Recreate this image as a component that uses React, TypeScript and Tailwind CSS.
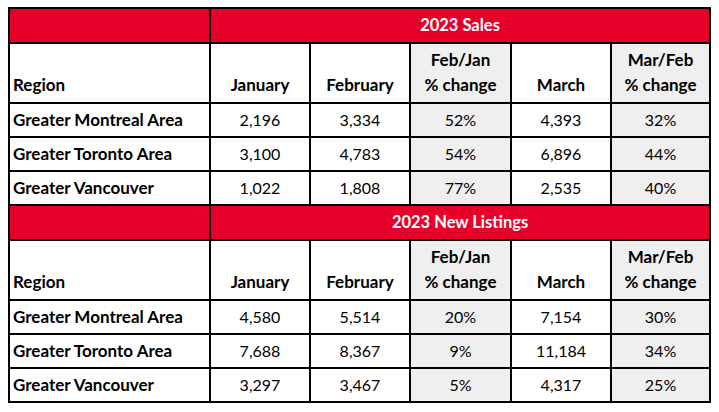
import React from "react"

type Row = {
  region: string
  jan: string
  feb: string
  febJan: string
  mar: string
  marFeb: string
}

const sales: Row[] = [
  { region: "Greater Montreal Area", jan: "2,196", feb: "3,334", febJan: "52%", mar: "4,393", marFeb: "32%" },
  { region: "Greater Toronto Area", jan: "3,100", feb: "4,783", febJan: "54%", mar: "6,896", marFeb: "44%" },
  { region: "Greater Vancouver", jan: "1,022", feb: "1,808", febJan: "77%", mar: "2,535", marFeb: "40%" },
]

const listings: Row[] = [
  { region: "Greater Montreal Area", jan: "4,580", feb: "5,514", febJan: "20%", mar: "7,154", marFeb: "30%" },
  { region: "Greater Toronto Area", jan: "7,688", feb: "8,367", febJan: "9%", mar: "11,184", marFeb: "34%" },
  { region: "Greater Vancouver", jan: "3,297", feb: "3,467", febJan: "5%", mar: "4,317", marFeb: "25%" },
]

const cell = "border-2 border-black"
const gray = "bg-[#efefef]"

function Section({ title, rows }: { title: string; rows: Row[] }) {
  return (
    <>
      {/* red title band */}
      <tr className="h-[35px] bg-[#e8002b]">
        <td className={cell}></td>
        <td colSpan={5} className={`${cell} text-center font-bold text-white text-[16.5px]`}>
          {title}
        </td>
      </tr>

      {/* column headings */}
      <tr className="h-[60px] font-bold align-bottom text-[17px]">
        <td className={`${cell} pl-[3px] pb-[5px] text-left`}>Region</td>
        <td className={`${cell} pb-[5px] text-center`}>January</td>
        <td className={`${cell} pb-[5px] text-center`}>February</td>
        <td className={`${cell} ${gray} pb-[5px] text-center leading-[25px]`}>
          Feb/Jan
          <br />% change
        </td>
        <td className={`${cell} pb-[5px] text-center`}>March</td>
        <td className={`${cell} ${gray} pb-[5px] text-center leading-[25px]`}>
          Mar/Feb
          <br />% change
        </td>
      </tr>

      {rows.map((r) => (
        <tr key={r.region} className="h-[34px]">
          <td className={`${cell} pl-[3px] font-bold text-[17px]`}>{r.region}</td>
          <td className={`${cell} text-center`}>{r.jan}</td>
          <td className={`${cell} text-center`}>{r.feb}</td>
          <td className={`${cell} ${gray} text-center`}>{r.febJan}</td>
          <td className={`${cell} text-center`}>{r.mar}</td>
          <td className={`${cell} ${gray} text-center`}>{r.marFeb}</td>
        </tr>
      ))}
    </>
  )
}

export default function App() {
  return (
    <div className="w-[719px] h-[412px] bg-white pl-[8px] pt-[7px] font-['Lato',sans-serif] text-[16px] text-black">
      <table className="border-collapse table-fixed w-[701px]">
        <colgroup>
          <col className="w-[201px]" />
          <col className="w-[100px]" />
          <col className="w-[100px]" />
          <col className="w-[101px]" />
          <col className="w-[100px]" />
          <col className="w-[99px]" />
        </colgroup>
        <tbody>
          <Section title="2023 Sales" rows={sales} />
          <Section title="2023 New Listings" rows={listings} />
        </tbody>
      </table>
    </div>
  )
}
